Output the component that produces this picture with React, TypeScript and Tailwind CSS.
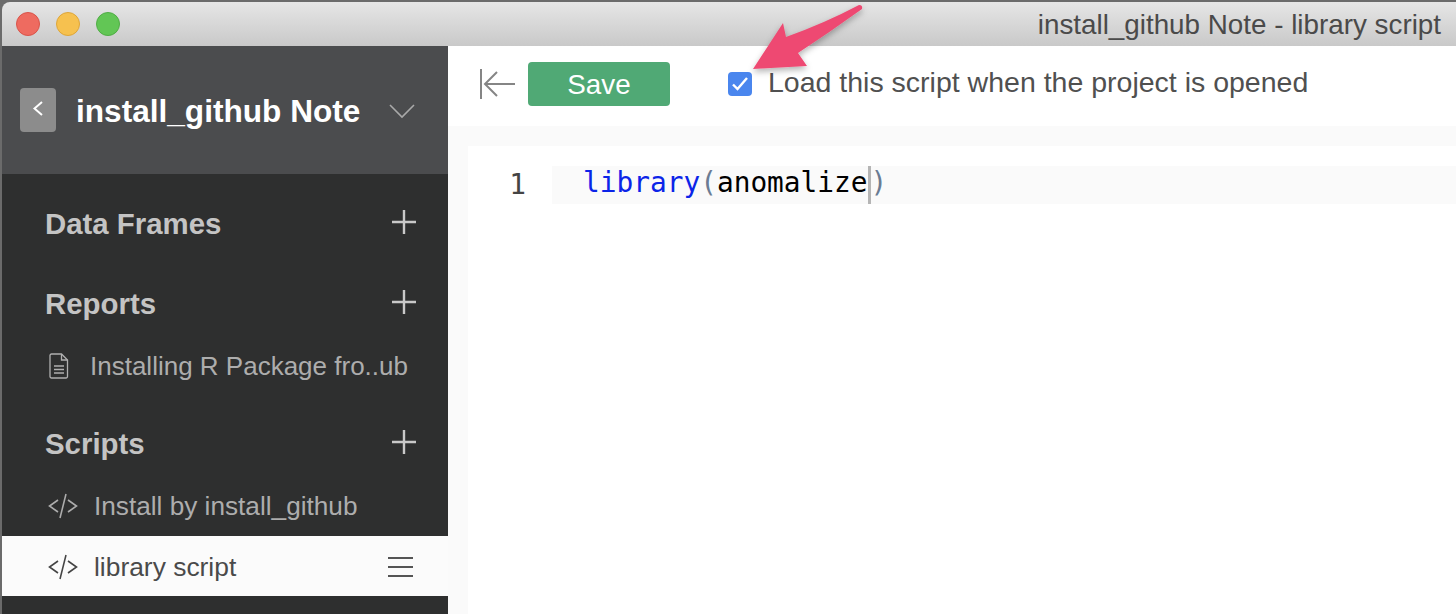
import React from "react";

const sans = "font-['Liberation_Sans',Arial,sans-serif]";

function Plus() {
  return (
    <svg width="26" height="26" viewBox="0 0 26 26" className="text-[#c9c9c9]">
      <path d="M13 1v24M1 13h24" stroke="currentColor" strokeWidth="2.4" fill="none" />
    </svg>
  );
}

function CodeIcon({ color }: { color: string }) {
  return (
    <svg width="30" height="26" viewBox="0 0 30 26" fill="none" stroke={color} strokeWidth="1.6">
      <path d="M10 7 L1.5 13 L10 19" />
      <path d="M18 1 L12 25" />
      <path d="M20 7 L28.5 13 L20 19" />
    </svg>
  );
}

function Section({ title, className }: { title: string; className: string }) {
  return (
    <div className={`flex items-center justify-between pl-[43px] pr-[31px] h-[32px] ${className}`}>
      <span className="h-[32px] pt-[2px] text-[29.4px] leading-[32px] font-bold text-[#c4c4c4]">{title}</span>
      <Plus />
    </div>
  );
}

export default function App() {
  return (
    <div className={`relative w-[1456px] h-[614px] overflow-hidden bg-[#6b6b6b] pt-[2px] pl-[2px] flex flex-col ${sans}`}>
      {/* Title bar */}
      <div className="h-[44px] shrink-0 rounded-tl-[8px] bg-gradient-to-b from-[#e6e6e6] to-[#c9c9c9] flex items-center justify-between pl-[14px] pr-[15px]">
        <div className="flex items-center gap-[16px]">
          <span className="w-[24px] h-[24px] rounded-full bg-[#ee6b60] border border-[#d9544a]" />
          <span className="w-[24px] h-[24px] rounded-full bg-[#f6c14f] border border-[#dea63a]" />
          <span className="w-[24px] h-[24px] rounded-full bg-[#62c655] border border-[#50ad45]" />
        </div>
        <span className="mt-[2px] text-[27.8px] leading-[30px] text-[#4a4a4a]">install_github Note - library script</span>
      </div>

      <div className="flex flex-1 min-h-0">
        {/* Sidebar */}
        <div className="w-[446px] shrink-0 bg-[#2e2f2f] flex flex-col">
          <div className="h-[128px] shrink-0 bg-[#4b4c4e] flex items-center pl-[18px]">
            <div className="w-[36px] h-[44px] rounded-[4px] bg-[#8c8c8c] flex justify-center pt-[12px]">
              <svg width="14" height="18" viewBox="0 0 14 18" fill="none" stroke="#ffffff" strokeWidth="2">
                <path d="M11 2 L3.5 8.5 L11 15" />
              </svg>
            </div>
            <span className="ml-[20px] mt-[2px] text-[31.6px] leading-[36px] font-bold text-white">install_github Note</span>
            <svg className="ml-[29px] mt-[2px]" width="26" height="16" viewBox="0 0 26 16" fill="none" stroke="#a9a9a9" strokeWidth="1.6">
              <path d="M1 2 L13 14 L25 2" />
            </svg>
          </div>

          <Section title="Data Frames" className="mt-[32px]" />
          <Section title="Reports" className="mt-[48px]" />
          <div className="flex items-center pl-[47px] mt-[32px] h-[32px]">
            <svg width="20" height="26" viewBox="0 0 20 26" fill="none" stroke="#b0b0b0" strokeWidth="1.3">
              <path d="M2.5 1h10l6 6v16.5a1.5 1.5 0 0 1-1.5 1.5H2.5A1.5 1.5 0 0 1 1 23.5V2.500A1.500 1.500 0 0 1 2.500 1z" />
              <path d="M12.500 1v6h6M5 13h10M5 16.500h10M5 20h10" />
            </svg>
            <span className="ml-[21px] -mt-[1px] text-[26px] leading-[30px] text-[#adadad]">Installing R Package fro..ub</span>
          </div>
          <Section title="Scripts" className="mt-[44px]" />
          <div className="flex items-center pl-[46px] mt-[32px] h-[32px]">
            <CodeIcon color="#adadad" />
            <span className="ml-[16px] text-[26.2px] leading-[30px] text-[#adadad]">Install by install_github</span>
          </div>
          <div className="mt-[14px] h-[60px] bg-[#fbfbfb] flex items-center pl-[46px] pr-[35px] pt-[2px]">
            <CodeIcon color="#444444" />
            <span className="ml-[16px] text-[26.4px] leading-[30px] text-[#4a4a4a]">library script</span>
            <svg className="ml-auto" width="25" height="22" viewBox="0 0 25 22" fill="none" stroke="#555555" strokeWidth="2">
              <path d="M0 2h25M0 11h25M0 20h25" />
            </svg>
          </div>
        </div>

        {/* Main */}
        <div className="flex-1 min-w-0 bg-white flex flex-col">
          <div className="h-[80px] shrink-0 flex items-center pl-[32px] pb-[4px]">
            <svg width="36" height="32" viewBox="0 0 36 32" fill="none" stroke="#858585" strokeWidth="2">
              <path d="M1 1v30" />
              <path d="M5 16h30" />
              <path d="M17 4 L5 16 L17 28" />
            </svg>
            <div className="ml-[12px] w-[142px] h-[44px] pt-[2px] rounded-[4px] bg-[#50a975] flex items-center justify-center text-[27.8px] text-white">
              Save
            </div>
            <div className="ml-[58px] w-[24px] h-[24px] rounded-[4px] bg-[#4a86ee] flex items-center justify-center">
              <svg width="18" height="16" viewBox="0 0 18 16" fill="none" stroke="#ffffff" strokeWidth="2.400">
                <path d="M2 8.500 L6.500 13 L16 2" />
              </svg>
            </div>
            <span className="ml-[16px] -mt-[5px] text-[28.5px] leading-[32px] text-[#505050]">Load this script when the project is opened</span>
          </div>
          <div className="flex-1 bg-[#fafafa] pl-[20px] pt-[20px]">
            <div className="h-full bg-white pt-[20px] flex items-start">
              <div className="w-[84px] shrink-0 h-[38px] pr-[26px] text-right font-['DejaVu_Sans_Mono',monospace] text-[27.8px] leading-[37px] text-[#444444]">
                1
              </div>
              <div className="flex-1 h-[38px] bg-[#fafafa] pl-[31px] font-['DejaVu_Sans_Mono',monospace] text-[27.8px] leading-[34px] whitespace-pre flex items-start">
                <span className="text-[#0b24e8]">library</span>
                <span className="text-[#6b7c93]">(</span>
                <span className="text-black">anomalize</span>
                <span className="border-l-[3px] border-[#b5b5b5] h-[38px]" />
                <span className="text-[#6b7c93]">)</span>
              </div>
            </div>
          </div>
        </div>
      </div>

      {/* Annotation arrow */}
      <svg className="absolute left-0 top-0 pointer-events-none" width="1456" height="614" viewBox="0 0 1456 614">
        <defs>
          <filter id="arrowShadow" x="-30%" y="-30%" width="160%" height="160%">
            <feDropShadow dx="0" dy="3" stdDeviation="3" floodColor="#000000" floodOpacity="0.3" />
          </filter>
        </defs>
        <path d="M753 69 L783 23 L786 37 Q825 23 859 5 Q863 5 862 9 Q830 32 798 53 L807 66 Z" fill="#ee4a72" filter="url(#arrowShadow)" />
      </svg>
    </div>
  );
}
